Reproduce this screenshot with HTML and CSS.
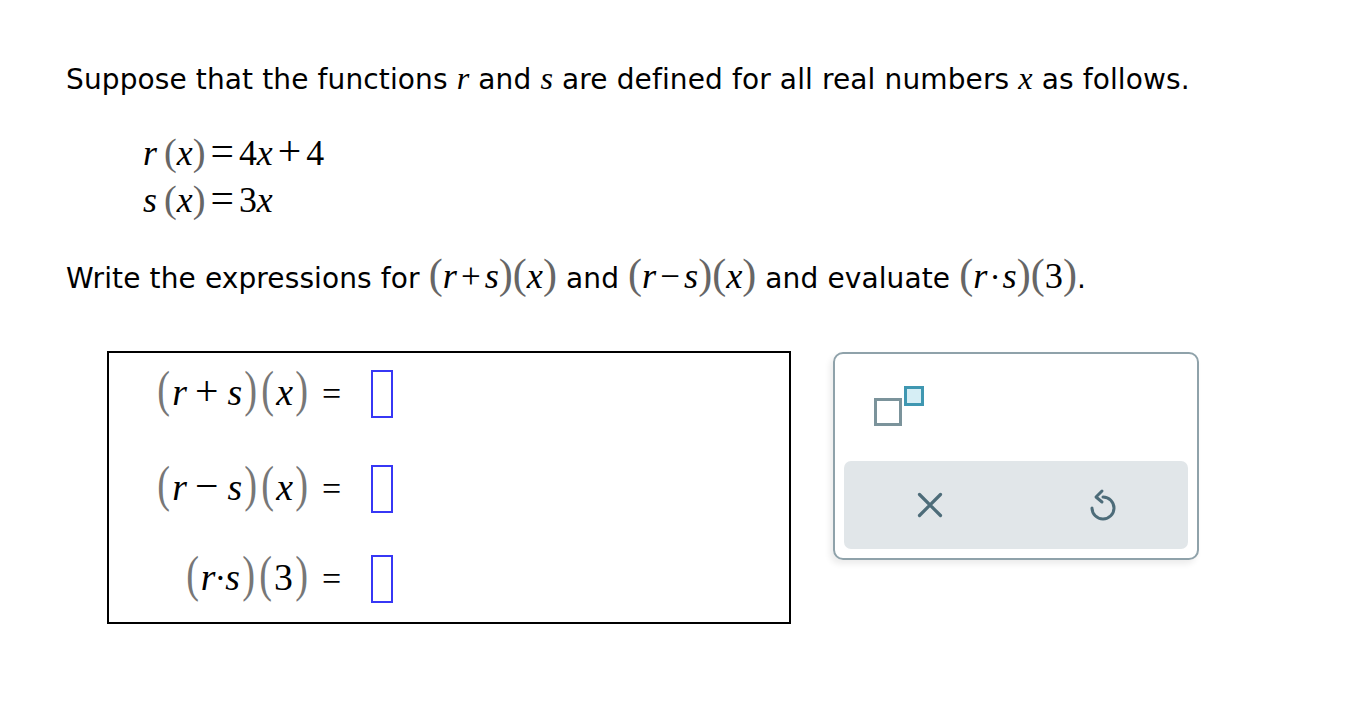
FILE: index.html
```html
<!DOCTYPE html>
<html>
<head>
<meta charset="utf-8">
<link rel="stylesheet" href="styles.css">
</head>
<body>
<div class="page">
  <p class="intro">Suppose that the functions <span class="mv">r</span> and <span class="mv">s</span> are defined for all real numbers <span class="mv">x</span> as follows.</p>
  <div class="defs">
    <div class="def"><span class="mv">r</span><span class="pa lp">(</span><span class="mv">x</span><span class="pa">)</span><span class="mo">=</span><span class="mn">4</span><span class="mv">x</span><span class="mo">+</span><span class="mn">4</span></div>
    <div class="def"><span class="mv">s</span><span class="pa lp">(</span><span class="mv">x</span><span class="pa">)</span><span class="mo">=</span><span class="mn">3</span><span class="mv">x</span></div>
  </div>
  <p class="task">Write the expressions for <span class="m"><span class="pa">(</span><span class="mv">r</span><span class="mo">+</span><span class="mv">s</span><span class="pa">)</span><span class="pa">(</span><span class="mv">x</span><span class="pa">)</span></span> and <span class="m"><span class="pa">(</span><span class="mv">r</span><span class="mo">−</span><span class="mv">s</span><span class="pa">)</span><span class="pa">(</span><span class="mv">x</span><span class="pa">)</span></span> and evaluate <span class="m"><span class="pa">(</span><span class="mv">r</span><span class="dot">·</span><span class="mv">s</span><span class="pa">)</span><span class="pa">(</span><span class="mn">3</span><span class="pa">)</span></span>.</p>

  <div class="work">
    <div class="answer-box">
      <div class="row">
        <div class="expr"><span class="bp">(</span><span class="mv">r</span><span class="bo">+</span><span class="mv">s</span><span class="bp">)</span><span class="bp">(</span><span class="mv">x</span><span class="bp">)</span></div>
        <div class="eq">=</div>
        <div class="slot"></div>
      </div>
      <div class="row">
        <div class="expr"><span class="bp">(</span><span class="mv">r</span><span class="bo">−</span><span class="mv">s</span><span class="bp">)</span><span class="bp">(</span><span class="mv">x</span><span class="bp">)</span></div>
        <div class="eq">=</div>
        <div class="slot"></div>
      </div>
      <div class="row">
        <div class="expr"><span class="bp">(</span><span class="mv">r</span><span class="bdot">·</span><span class="mv">s</span><span class="bp">)</span><span class="bp">(</span><span class="mn">3</span><span class="bp">)</span></div>
        <div class="eq">=</div>
        <div class="slot"></div>
      </div>
    </div>

    <div class="panel">
      <div class="tools">
        <svg class="sup-icon" width="54" height="44" viewBox="0 0 54 44">
          <rect x="3.5" y="14.5" width="25" height="25" fill="#fff" stroke="#7b939b" stroke-width="3"/>
          <rect x="33.5" y="2.5" width="17" height="17" fill="#d6eef5" stroke="#3f97b1" stroke-width="3"/>
        </svg>
      </div>
      <div class="actions">
        <svg class="act" width="28" height="28" viewBox="0 0 28 28">
          <path d="M3.5 3.5 L24.5 24.5 M24.5 3.5 L3.5 24.5" stroke="#4d6c79" stroke-width="3.2" stroke-linecap="round" fill="none"/>
        </svg>
        <svg class="act" width="30" height="34" viewBox="0 0 30 34">
          <path d="M16 9 A11 11 0 1 1 5 20" stroke="#4d6c79" stroke-width="3" fill="none" stroke-linecap="round"/>
          <path d="M15 3 L9 9 L15 14" stroke="#4d6c79" stroke-width="3" fill="none" stroke-linecap="round" stroke-linejoin="round"/>
        </svg>
      </div>
    </div>
  </div>
</div>
</body>
</html>
```

FILE: styles.css
```css
html, body {
  margin: 0;
  padding: 0;
  background: #fff;
}
body {
  font-family: "DejaVu Sans", Verdana, sans-serif;
  font-size: 28px;
  color: #000;
}
.page {
  padding: 60px 0 0 66px;
}
p {
  margin: 0;
}
.intro {
  line-height: 40px;
  letter-spacing: 0.12px;
}
.mv {
  font-family: "Liberation Serif", "Times New Roman", serif;
  font-style: italic;
  font-size: 1.15em;
  line-height: 0;
}
.mn, .mo, .dot {
  font-family: "Liberation Serif", "Times New Roman", serif;
  font-size: 1.15em;
  line-height: 0;
}
.pa {
  font-family: "Liberation Serif", "Times New Roman", serif;
  font-size: 1.3em;
  color: #666;
  line-height: 0;
}

/* definitions */
.defs {
  margin: 31px 0 0 77px;
  font-size: 32px;
}
.def {
  line-height: 47px;
  white-space: nowrap;
}
.def .mv, .def .mn {
  font-size: 1.12em;
}
.def .pa {
  font-size: 1.2em;
}
.def .lp {
  margin-left: 7px;
}
.def .mo {
  font-size: 1.3em;
  margin: 0 5px;
}

/* task line */
.task {
  margin-top: 34px;
  line-height: 40px;
  white-space: nowrap;
  letter-spacing: 0.12px;
}
.m {
  letter-spacing: 0;
}
.m .mv, .m .mn {
  font-size: 1.3em;
}
.m .pa {
  font-size: 1.5em;
}
.m .mo {
  font-size: 1.25em;
  margin: 0 4px;
}
.m .dot {
  font-size: 1.2em;
  margin: 0 2px;
}

/* answer area */
.work {
  display: flex;
  align-items: flex-start;
  gap: 42px;
  margin: 52px 0 0 41px;
}
.answer-box {
  box-sizing: border-box;
  width: 684px;
  height: 273px;
  border: 2px solid #000;
  padding: 17px 0 0 0;
  display: flex;
  flex-direction: column;
}
.row {
  display: flex;
  align-items: center;
  height: 48px;
}
.row:nth-child(2) {
  margin-top: 47px;
}
.row:nth-child(3) {
  margin-top: 42px;
}
.expr {
  width: 201px;
  text-align: right;
  font-size: 32px;
  white-space: nowrap;
  line-height: 48px;
}
.expr .mv, .expr .mn {
  font-size: 1.18em;
}
.expr .bp {
  font-family: "Liberation Serif", serif;
  font-size: 1.6em;
  color: #777;
  display: inline-block;
  transform: scaleX(0.75);
  line-height: 0;
  vertical-align: -1px;
}
.expr .bo {
  font-family: "Liberation Serif", serif;
  font-size: 1.3em;
  line-height: 0;
  margin: 0 9px 0 8px;
}
.expr .bdot {
  font-family: "Liberation Serif", serif;
  font-size: 1.1em;
  line-height: 0;
  margin: 0 -1px;
}
.eq {
  font-family: "Liberation Serif", serif;
  font-size: 34px;
  margin-left: 12px;
  width: 49px;
}
.slot {
  box-sizing: border-box;
  width: 22px;
  height: 48px;
  border: 2px solid #3737f5;
}

/* right panel */
.panel {
  box-sizing: border-box;
  width: 366px;
  height: 208px;
  margin-top: 1px;
  border: 2px solid #8fa2aa;
  border-radius: 10px;
  padding: 0 9px 9px 9px;
  display: flex;
  flex-direction: column;
  box-shadow: -3px 4px 6px rgba(0, 0, 0, 0.08);
}
.tools {
  height: 107px;
  padding: 31px 0 0 28px;
  box-sizing: border-box;
}
.sup-icon {
  display: block;
}
.actions {
  flex: 1;
  background: #e1e6e9;
  border-radius: 7px;
  display: flex;
  align-items: center;
  justify-content: space-between;
  padding: 0 71px 0 72px;
}
.act {
  display: block;
}
```
